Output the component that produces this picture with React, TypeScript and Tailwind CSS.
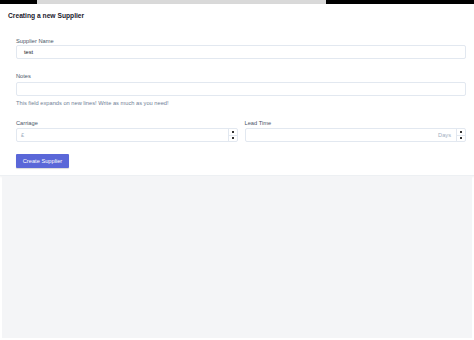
import React from "react";

const font = { fontFamily: '"Helvetica Neue", "Liberation Sans", Arial, sans-serif' };

const Spinner = () => (
  <div className="flex flex-col w-[9px] border-l border-[#e2e8f0]">
    <div className="flex-1 flex items-center justify-center border-b border-[#e2e8f0]">
      <span className="block w-[2px] h-[2px] bg-[#333]" />
    </div>
    <div className="flex-1 flex items-center justify-center">
      <span className="block w-[2px] h-[2px] bg-[#333]" />
    </div>
  </div>
);

const App = () => {
  return (
    <div className="w-[474px] h-[340px] bg-white flex flex-col overflow-hidden" style={font}>
      <div className="h-[4px] bg-black flex shrink-0">
        <div className="w-[37px]" />
        <div className="w-[289px] bg-[#d9d9d9]" />
      </div>

      <div className="bg-white pt-[7px] pb-[7px] shadow-[0_1px_2px_rgba(0,0,0,0.06)] border-b border-[#edf0f3]">
        <h1 className="px-[8px] text-[6.7px] font-semibold text-[#1a202c] leading-[10px]">Creating a new Supplier</h1>

        <div className="pl-[16px] pr-[8px] pt-[16px] flex flex-col">
          <label className="text-[5.7px] text-[#4a5568] leading-[8px]">Supplier Name</label>
          <div className="h-[14px] border border-[#e2e8f0] rounded-[2px] flex items-center px-[7px] text-[5.7px] text-[#1a202c]">test</div>

          <label className="text-[5.7px] text-[#4a5568] leading-[8px] mt-[13px] mb-[2px]">Notes</label>
          <div className="h-[14px] border border-[#e2e8f0] rounded-[2px]" />
          <p className="text-[5.7px] text-[#718096] leading-[8px] mt-[3px]">This field expands on new lines! Write as much as you need!</p>

          <div className="grid grid-cols-2 gap-[7px] mt-[12px]">
            <div className="flex flex-col">
              <label className="text-[5.7px] text-[#4a5568] leading-[8px] mb-[1px]">Carriage</label>
              <div className="h-[14px] border border-[#e2e8f0] rounded-[2px] flex">
                <div className="flex-1 flex items-center px-[4px] text-[5.7px] text-[#a0aec0]">£</div>
                <Spinner />
              </div>
            </div>
            <div className="flex flex-col">
              <label className="text-[5.7px] text-[#4a5568] leading-[8px] mb-[1px]">Lead Time</label>
              <div className="h-[14px] border border-[#e2e8f0] rounded-[2px] flex">
                <div className="flex-1 flex items-center justify-end px-[5px] text-[5.7px] text-[#a0aec0]">Days</div>
                <Spinner />
              </div>
            </div>
          </div>

          <div className="mt-[12px]">
            <button className="h-[14px] w-[53px] bg-[#5a67d8] text-white text-[5.7px] rounded-[1px] flex items-center justify-center shadow-[0_1px_1px_rgba(0,0,0,0.15)]">
              Create Supplier
            </button>
          </div>
        </div>
      </div>

      <div className="flex-1 bg-[#f4f5f7] mx-[2px] mb-[2px]" />
    </div>
  );
};

export default App;
